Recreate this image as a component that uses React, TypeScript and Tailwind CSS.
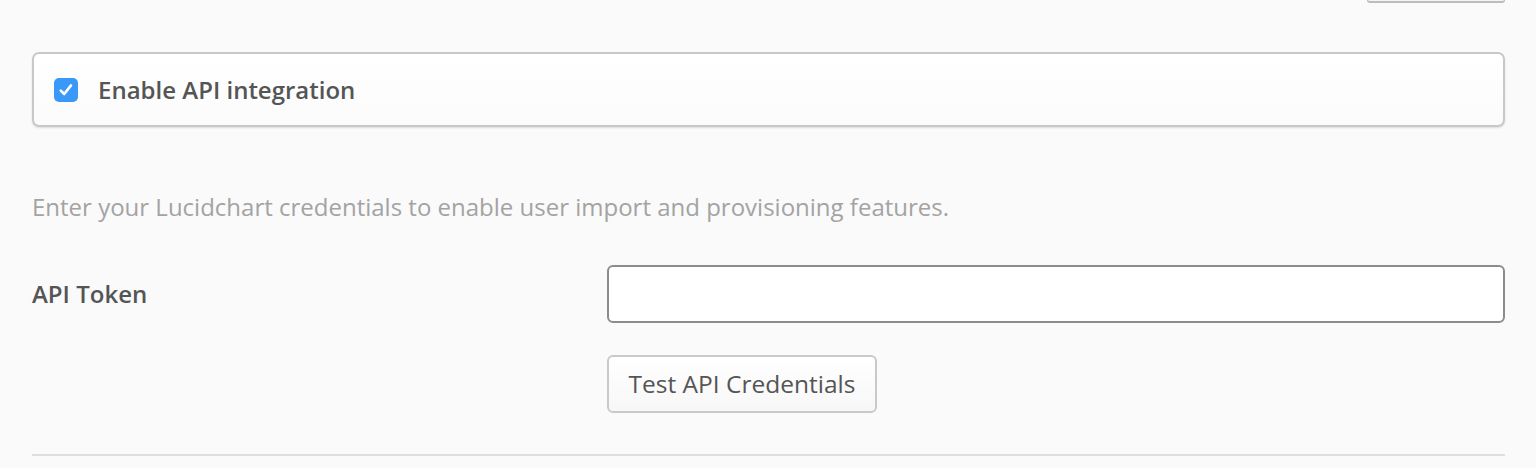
import React from "react";

export default function App() {
  return (
    <div
      className="w-[1536px] h-[468px] overflow-hidden bg-[#fafafa] pl-[32px] pr-[31px]"
      style={{ fontFamily: "'Open Sans', Lato, sans-serif" }}
    >
      <div className="flex justify-end">
        <div className="h-[3px] w-[138px] rounded-b-[4px] border-b-2 border-x border-[#bdbdbd] bg-[#f4f4f4]" />
      </div>
      <div className="mt-[49px] h-[75px] rounded-[7px] border-2 border-[#c8c8c8] bg-gradient-to-b from-white to-[#fbfbfb] shadow-[0_1px_2px_rgba(0,0,0,0.12)] flex items-center pl-[20px]">
        <div className="w-[24px] h-[24px] shrink-0 rounded-[5px] bg-[#3a98f8] flex items-center justify-center">
          <svg width="18" height="18" viewBox="0 0 18 18" fill="none">
            <path d="M3.8 9.6 L7.2 13 L14 4.4" stroke="white" strokeWidth="2.6" strokeLinecap="round" strokeLinejoin="round" />
          </svg>
        </div>
        <span className="ml-[20px] text-[24px] font-semibold text-[#555555] leading-none">Enable API integration</span>
      </div>
      <p className="mt-[64px] text-[24px] leading-[32px] text-[#a3a3a3]">
        Enter your Lucidchart credentials to enable user import and provisioning features.
      </p>
      <div className="mt-[42px] grid grid-cols-[575px_1fr]">
        <div className="flex items-center h-[58px] text-[24px] font-semibold text-[#555555]">API Token</div>
        <div>
          <input
            type="text"
            className="block w-full h-[58px] rounded-[6px] border-2 border-[#8c8c8c] bg-white outline-none px-3 text-[22px]"
          />
          <button className="mt-[32px] h-[58px] w-[270px] rounded-[6px] border-2 border-[#c9c9c9] bg-gradient-to-b from-white to-[#f7f7f7] text-[24.5px] text-[#555555]">
            Test API Credentials
          </button>
        </div>
      </div>
      <div className="mt-[41px] h-[2px] bg-[#dedede]" />
    </div>
  );
}
